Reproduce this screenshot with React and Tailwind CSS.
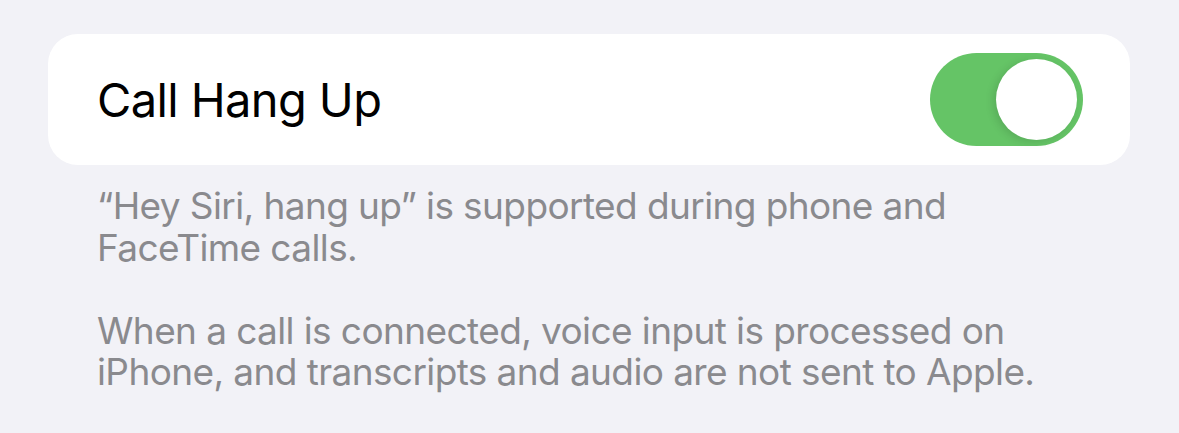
import React, { useState } from 'react';

// iOS-style switch: green track, white knob sliding to the right when on
function Toggle({ on, onChange }) {
  return (
    <button
      type="button"
      onClick={() => onChange(!on)}
      className={`flex h-[93px] w-[153px] shrink-0 items-center rounded-full p-[6px] transition-colors ${on ? 'justify-end bg-[#65c466]' : 'justify-start bg-[#e9e9ea]'}`}
    >
      <span className="block h-[81px] w-[81px] rounded-full bg-white shadow-[-3px_2px_8px_rgba(0,0,0,0.12)]" />
    </button>
  );
}

export default function App() {
  const [enabled, setEnabled] = useState(true);

  return (
    <div className="min-h-[433px] w-full bg-[#f2f2f7] px-[48px] pt-[34px] font-['Inter','Liberation_Sans',sans-serif] antialiased">
      {/* setting row */}
      <div className="flex h-[131px] w-[1082px] items-center justify-between rounded-[30px] bg-white pl-[49px] pr-[47px]">
        <span className="text-[47px] leading-none tracking-[-0.6px] text-black">Call Hang Up</span>
        <Toggle on={enabled} onChange={setEnabled} />
      </div>

      {/* footer notes */}
      <div className="pl-[49px] pt-[20px] text-[37px] leading-[41.5px] tracking-[-0.6px] text-[#8a8a8e]">
        <p>
          “Hey Siri, hang up” is supported during phone and
          <br />
          FaceTime calls.
        </p>
        <p className="mt-[41.5px]">
          When a call is connected, voice input is processed on
          <br />
          iPhone, and transcripts and audio are not sent to Apple.
        </p>
      </div>
    </div>
  );
}
